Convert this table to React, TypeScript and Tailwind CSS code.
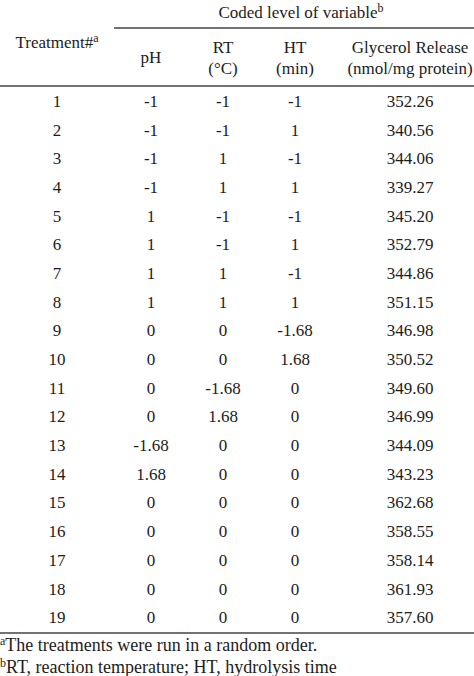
import React from "react";

type Row = [string, string, string, string, string];

const rows: Row[] = [
  ["1", "-1", "-1", "-1", "352.26"],
  ["2", "-1", "-1", "1", "340.56"],
  ["3", "-1", "1", "-1", "344.06"],
  ["4", "-1", "1", "1", "339.27"],
  ["5", "1", "-1", "-1", "345.20"],
  ["6", "1", "-1", "1", "352.79"],
  ["7", "1", "1", "-1", "344.86"],
  ["8", "1", "1", "1", "351.15"],
  ["9", "0", "0", "-1.68", "346.98"],
  ["10", "0", "0", "1.68", "350.52"],
  ["11", "0", "-1.68", "0", "349.60"],
  ["12", "0", "1.68", "0", "346.99"],
  ["13", "-1.68", "0", "0", "344.09"],
  ["14", "1.68", "0", "0", "343.23"],
  ["15", "0", "0", "0", "362.68"],
  ["16", "0", "0", "0", "358.55"],
  ["17", "0", "0", "0", "358.14"],
  ["18", "0", "0", "0", "361.93"],
  ["19", "0", "0", "0", "357.60"],
];

const cols = "grid grid-cols-[114px_74px_70px_74px_142px]";

const App: React.FC = () => {
  return (
    <div
      className="w-[474px] h-[676px] overflow-hidden bg-white text-[#1c1c1c] text-[17px] leading-[21px]"
      style={{ fontFamily: '"Liberation Serif", "Times New Roman", serif' }}
    >
      {/* header */}
      <div className={`${cols} h-[87px] border-b-[2px] border-[#727272]`}>
        <div className="row-span-2 flex items-center justify-center">
          <span>
            Treatment#<sup className="text-[12px]">a</sup>
          </span>
        </div>
        <div className="col-span-4 h-[29px] border-b-[2px] border-[#727272] flex items-center justify-center pl-[14px] pb-[2px]">
          <span>
            Coded level of variable<sup className="text-[12px]">b</sup>
          </span>
        </div>
        <div className="flex items-center justify-center pb-[4px]">pH</div>
        <div className="flex flex-col items-center justify-center pb-[3px]">
          <span>RT</span>
          <span>(°C)</span>
        </div>
        <div className="flex flex-col items-center justify-center pb-[3px]">
          <span>HT</span>
          <span>(min)</span>
        </div>
        <div className="flex flex-col items-center justify-center pl-[14px] pb-[3px] whitespace-nowrap">
          <span>Glycerol Release</span>
          <span>(nmol/mg protein)</span>
        </div>
      </div>

      {/* body */}
      <div className="border-b-[2px] border-[#727272]">
        {rows.map((r) => (
          <div key={r[0]} className={`${cols} h-[28.7px] items-center text-center`}>
            <div>{r[0]}</div>
            <div>{r[1]}</div>
            <div>{r[2]}</div>
            <div>{r[3]}</div>
            <div className="pl-[14px]">{r[4]}</div>
          </div>
        ))}
      </div>

      {/* footnotes */}
      <div className="text-[18px] leading-[22px]">
        <div>
          <sup className="text-[12px]">a</sup>The treatments were run in a random order.
        </div>
        <div>
          <sup className="text-[12px]">b</sup>RT, reaction temperature; HT, hydrolysis time
        </div>
      </div>
    </div>
  );
};

export default App;
